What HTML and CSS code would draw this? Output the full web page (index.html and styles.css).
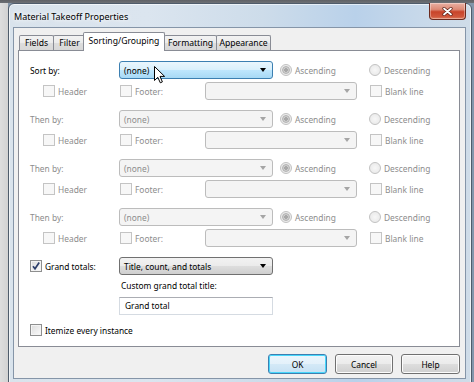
FILE: index.html
```html
<!DOCTYPE html>
<html>
<head>
<meta charset="utf-8">
<link rel="stylesheet" href="styles.css">
</head>
<body>
<div class="desk">
  <div class="window">
    <div class="titlebar">
      <span class="title">Material Takeoff Properties</span>
      <div class="close">
        <svg width="11" height="9" viewBox="0 0 11 9"><path d="M2 1.5 L9 7.5 M9 1.5 L2 7.5" stroke="#5a1e14" stroke-width="3.2" stroke-linecap="round"/><path d="M2 1.5 L9 7.5 M9 1.5 L2 7.5" stroke="#fff" stroke-width="1.8" stroke-linecap="round"/></svg>
      </div>
    </div>
    <div class="client">
      <div class="tabs">
        <div class="tab t-fields">Fields</div>
        <div class="tab t-filter">Filter</div>
        <div class="tab sel">Sorting/Grouping</div>
        <div class="tab t-format">Formatting</div>
        <div class="tab t-appear">Appearance</div>
      </div>
      <div class="panel">
        <div class="group">
          <div class="row1">
            <span class="lbl">Sort by:</span>
            <div class="combo hot"><span>(none)</span><i class="arrow"></i>
              <svg class="cursor" width="12" height="18" viewBox="0 0 12 18"><path d="M0.5 0.5 L0.5 14.5 L3.8 11.3 L6.3 16.8 L8.4 15.9 L6 10.4 L10.6 10.4 Z" fill="#fff" stroke="#000" stroke-width="1" stroke-linejoin="round"/></svg>
            </div>
            <label class="opt asc dis"><i class="radio on"></i>Ascending</label>
            <label class="opt dis"><i class="radio"></i>Descending</label>
          </div>
          <div class="row2">
            <label class="opt hdr dis"><i class="cb"></i>Header</label>
            <label class="opt ftr dis"><i class="cb"></i>Footer:</label>
            <div class="combo wide off"><span></span><i class="arrow"></i></div>
            <label class="opt blank dis"><i class="cb"></i>Blank line</label>
          </div>
        </div>
        <div class="group">
          <div class="row1">
            <span class="lbl dis">Then by:</span>
            <div class="combo off"><span>(none)</span><i class="arrow"></i></div>
            <label class="opt asc dis"><i class="radio on"></i>Ascending</label>
            <label class="opt dis"><i class="radio"></i>Descending</label>
          </div>
          <div class="row2">
            <label class="opt hdr dis"><i class="cb"></i>Header</label>
            <label class="opt ftr dis"><i class="cb"></i>Footer:</label>
            <div class="combo wide off"><span></span><i class="arrow"></i></div>
            <label class="opt blank dis"><i class="cb"></i>Blank line</label>
          </div>
        </div>
        <div class="group">
          <div class="row1">
            <span class="lbl dis">Then by:</span>
            <div class="combo off"><span>(none)</span><i class="arrow"></i></div>
            <label class="opt asc dis"><i class="radio on"></i>Ascending</label>
            <label class="opt dis"><i class="radio"></i>Descending</label>
          </div>
          <div class="row2">
            <label class="opt hdr dis"><i class="cb"></i>Header</label>
            <label class="opt ftr dis"><i class="cb"></i>Footer:</label>
            <div class="combo wide off"><span></span><i class="arrow"></i></div>
            <label class="opt blank dis"><i class="cb"></i>Blank line</label>
          </div>
        </div>
        <div class="group">
          <div class="row1">
            <span class="lbl dis">Then by:</span>
            <div class="combo off"><span>(none)</span><i class="arrow"></i></div>
            <label class="opt asc dis"><i class="radio on"></i>Ascending</label>
            <label class="opt dis"><i class="radio"></i>Descending</label>
          </div>
          <div class="row2">
            <label class="opt hdr dis"><i class="cb"></i>Header</label>
            <label class="opt ftr dis"><i class="cb"></i>Footer:</label>
            <div class="combo wide off"><span></span><i class="arrow"></i></div>
            <label class="opt blank dis"><i class="cb"></i>Blank line</label>
          </div>
        </div>
        <div class="grand">
          <label class="opt gt"><i class="cb chk"><svg width="10" height="10" viewBox="0 0 10 10"><path d="M2 5.2 L4 7.8 L8.2 1.6" fill="none" stroke="#2d3f6b" stroke-width="1.7"/></svg></i>Grand totals:</label>
          <div class="combo norm"><span>Title, count, and totals</span><i class="arrow"></i></div>
        </div>
        <div class="custom">Custom grand total title:</div>
        <div class="textbox">Grand total</div>
        <label class="opt itemize"><i class="cb"></i>Itemize every instance</label>
      </div>
      <div class="buttons">
        <div class="btn def">OK</div>
        <div class="btn cancel">Cancel</div>
        <div class="btn">Help</div>
      </div>
    </div>
  </div>
</div>
</body>
</html>
```

FILE: styles.css
```css
* { box-sizing: border-box; }
html, body { margin: 0; padding: 0; }
body {
  font-family: "Noto Sans", "Open Sans", sans-serif;
  font-size: 8.4px;
  color: #000;
  background: #6c7580;
  overflow: hidden;
}
.desk {
  width: 474px;
  height: 382px;
  padding: 3px 0 0 8px;
  background:
    linear-gradient(#5f6165 0, #6d7075 3px, transparent 3px),
    linear-gradient(to right, #dedede 0, #d2d2d2 8px, #8396ab 8px);
  overflow: hidden;
}
.window {
  width: 464px;
  height: 384px;
  border: 1px solid #4f5c6b;
  border-radius: 6px 6px 0 0;
  background: linear-gradient(to right, #d9e3ec 0%, #dbe5ef 30%, #cddcea 55%, #b9d1ea 75%, #c8d9ea 90%, #cfdce8 100%);
  box-shadow: inset 0 0 0 1px rgba(255,255,255,0.6);
  padding: 0 5px 0 4px;
  display: flex;
  flex-direction: column;
}
.titlebar {
  height: 23px;
  display: flex;
  align-items: flex-start;
  padding-left: 1px;
}
.title {
  margin-top: 6px;
  font-size: 9px;
  text-shadow: 0 0 4px #fff, 0 0 6px #fff;
}
.close {
  margin-left: auto;
  margin-top: -1px;
  width: 37px;
  height: 17px;
  border: 1px solid #6b2a1e;
  border-top: none;
  border-radius: 0 0 4px 4px;
  background: linear-gradient(#eab0a3 0%, #dd8a76 40%, #c8442a 55%, #d0573c 85%, #e07f5f 100%);
  box-shadow: inset 0 0 0 1px rgba(255,255,255,0.35);
  display: flex;
  align-items: center;
  justify-content: center;
}
.client {
  height: 352px;
  border: 1px solid #8595a8;
  background: #f0f0f0;
  padding: 4px 5px 0 4px;
  display: flex;
  flex-direction: column;
}
.tabs {
  display: flex;
  align-items: flex-end;
  height: 18px;
  padding-left: 1px;
}
.tab {
  height: 15px;
  line-height: 14px;
  text-align: center;
  font-size: 8.6px;
  border: 1px solid #898c95;
  border-bottom: none;
  margin-right: -1px;
  background: linear-gradient(#f3f3f3, #ebebeb 50%, #dddddd 50%, #d8d8d8);
  border-radius: 2px 2px 0 0;
}
.t-fields { width: 35px; }
.t-filter { width: 33px; }
.t-format { width: 53px; }
.t-appear { width: 55px; }
.tab.sel {
  width: 82px;
  height: 19px;
  line-height: 16px;
  background: #fff;
  margin: 0 -1px -1px -2px;
  position: relative;
  z-index: 1;
}
.panel {
  height: 297px;
  background: #fff;
  border: 1px solid #898c95;
  padding: 10px 0 0 11px;
}
.group { margin-bottom: 10px; }
.row1, .row2 {
  display: flex;
  align-items: center;
  height: 18px;
}
.row2 {
  margin-top: 3px;
  padding-left: 13px;
}
.lbl { width: 89px; }
.dis { color: #8d8d8d; }
.opt {
  display: flex;
  align-items: center;
  gap: 3px;
}
.asc { margin-left: 7px; width: 89px; }
.hdr { width: 77px; }
.ftr { width: 85px; }
.blank { margin-left: 13px; }
.combo {
  width: 154px;
  height: 18px;
  border: 1px solid #707070;
  border-radius: 3px;
  display: flex;
  align-items: center;
  padding-left: 4px;
  position: relative;
}
.combo.wide { width: 152px; }
.combo.hot {
  border-color: #3c7fb1;
  background: linear-gradient(#eaf6fd 0%, #d9f0fc 48%, #bee6fd 52%, #a7d9f5 100%);
}
.combo.norm {
  background: linear-gradient(#f2f2f2 0%, #ebebeb 48%, #dddddd 52%, #cfcfcf 100%);
}
.combo.off {
  border-color: #bcbcbc;
  background: #f4f4f4;
  color: #8d8d8d;
}
.arrow {
  margin-left: auto;
  margin-right: 6px;
  width: 0;
  height: 0;
  border-left: 3px solid transparent;
  border-right: 3px solid transparent;
  border-top: 4px solid #000;
}
.combo.off .arrow { border-top-color: #a5a5a5; }
.cursor {
  position: absolute;
  left: 34px;
  top: 4px;
}
.cb {
  width: 12px;
  height: 12px;
  border: 1px solid #8e8f8f;
  background: linear-gradient(135deg, #dcdcdc, #fbfbfb);
  box-shadow: inset 0 0 0 1px #f4f4f4;
  display: flex;
  align-items: center;
  justify-content: center;
}
.dis .cb {
  border-color: #c4c4c4;
  background: #f7f7f7;
  box-shadow: none;
}
.radio {
  width: 12px;
  height: 12px;
  border-radius: 50%;
  border: 1px solid #c2c2c2;
  background: radial-gradient(circle at 50% 50%, #f7f7f7 0, #e6e6e6 100%);
  display: flex;
  align-items: center;
  justify-content: center;
}
.radio.on::after {
  content: "";
  width: 6px;
  height: 6px;
  border-radius: 50%;
  background: radial-gradient(circle, #a8a8a8 0, #a8a8a8 40%, #d0d0d0 45%, #c8c8c8 100%);
  border: 1px solid #b2b2b2;
}
.grand {
  display: flex;
  align-items: center;
  height: 18px;
  margin-top: 2px;
}
.gt { width: 89px; }
.custom {
  margin-top: 5px;
  padding-left: 91px;
  height: 12px;
  line-height: 12px;
}
.textbox {
  margin: 5px 0 0 89px;
  width: 154px;
  height: 18px;
  border: 1px solid #d5dbe2;
  border-top-color: #abadb3;
  background: #fff;
  padding-left: 5px;
  line-height: 16px;
}
.itemize { margin-top: 9px; }
.buttons {
  display: flex;
  justify-content: flex-end;
  gap: 8px;
  margin-top: 7px;
}
.btn {
  width: 59px;
  height: 20px;
  border: 1px solid #707070;
  border-radius: 3px;
  background: linear-gradient(#f2f2f2 0%, #ebebeb 48%, #dddddd 52%, #cfcfcf 100%);
  box-shadow: inset 0 0 0 1px #fcfcfc;
  display: flex;
  align-items: center;
  justify-content: center;
}
.btn.cancel { width: 58px; }
.btn.def {
  border-color: #3c7fb1;
  box-shadow: inset 0 0 0 1px #48d7fb;
  background: linear-gradient(#eaf6fd 0%, #e4f1fa 48%, #d4e9f7 52%, #c6e1f3 100%);
}
```
